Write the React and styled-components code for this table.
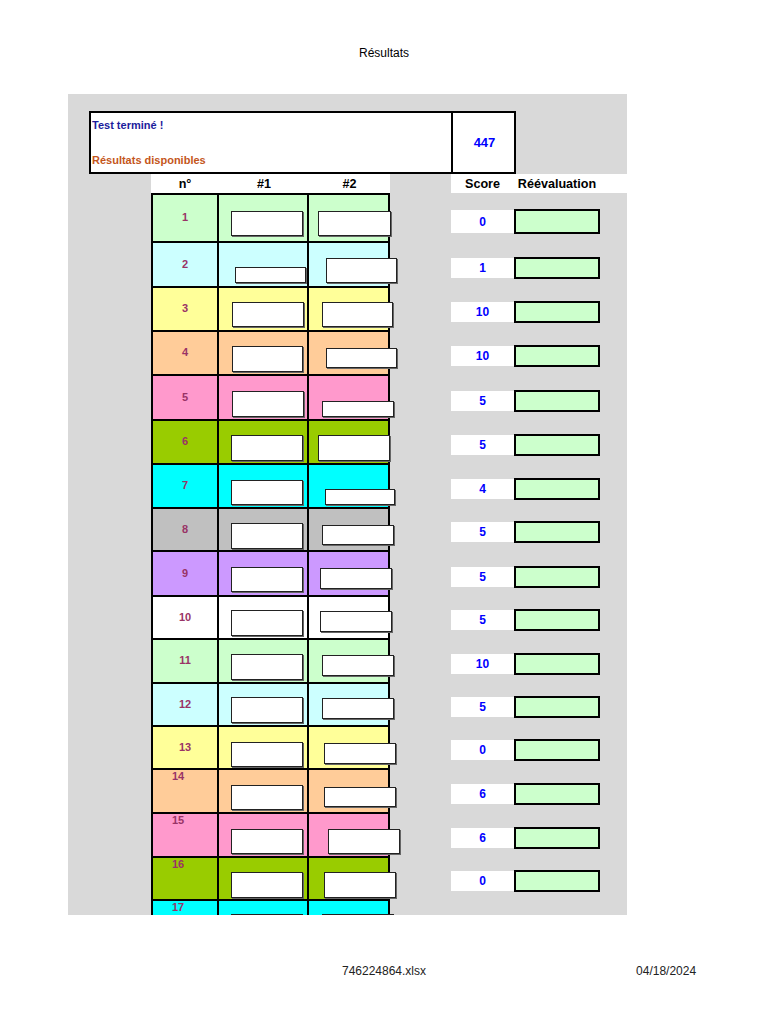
import React from "react";
import styled, { createGlobalStyle } from "styled-components";

const GlobalStyle = createGlobalStyle`
  html, body {
    margin: 0;
    padding: 0;
    background: #fff;
  }
  body {
    font-family: "Liberation Sans", Arial, sans-serif;
    color: #000;
  }
`;

const COLORS = {
  green: "#ccffcc",
  ice: "#ccffff",
  yellow: "#ffff99",
  peach: "#ffcc99",
  pink: "#ff99cc",
  olive: "#99cc00",
  cyan: "#00ffff",
  gray: "#c0c0c0",
  lilac: "#cc99ff",
  white: "#ffffff",
};

// [color, height, box #1 [left, top, w, h], box #2 [left, top, w, h], score]
const rows = [
  ["green", 50, [12, 16, 72, 25], [9, 16, 73, 25], 0],
  ["ice", 45, [16, 24, 71, 16], [17, 15, 71, 25], 1],
  ["yellow", 44, [13, 14, 72, 25], [13, 14, 71, 25], 10],
  ["peach", 44, [13, 14, 71, 26], [17, 16, 71, 20], 10],
  ["pink", 45, [13, 15, 72, 26], [13, 25, 72, 16], 5],
  ["olive", 44, [12, 14, 72, 26], [9, 14, 72, 26], 5],
  ["cyan", 44, [12, 15, 72, 25], [16, 24, 70, 16], 4],
  ["gray", 43, [12, 14, 72, 26], [13, 16, 72, 20], 5],
  ["lilac", 45, [12, 15, 72, 25], [11, 16, 72, 21], 5],
  ["white", 43, [12, 13, 72, 26], [11, 14, 72, 21], 5],
  ["green", 44, [12, 14, 72, 26], [13, 15, 72, 21], 10],
  ["ice", 43, [12, 13, 72, 26], [13, 14, 72, 21], 5],
  ["yellow", 43, [12, 15, 72, 25], [15, 16, 72, 21], 0],
  ["peach", 44, [12, 15, 72, 25], [15, 17, 72, 20], 6],
  ["pink", 44, [12, 15, 72, 25], [19, 15, 72, 25], 6],
  ["olive", 43, [12, 14, 72, 26], [15, 14, 72, 26], 0],
  ["cyan", 44, [12, 13, 72, 25], [13, 13, 72, 25], null],
];

const COLUMNS = "83px 68px 90px 81px 61px 63px 86px 1fr";

const Page = styled.div`
  width: 768px;
  height: 1024px;
  display: flex;
  flex-direction: column;
`;

const Title = styled.div`
  height: 94px;
  box-sizing: border-box;
  padding-top: 45px;
  text-align: center;
  font-size: 12px;
  line-height: 16px;
`;

const Sheet = styled.div`
  margin-left: 68px;
  width: 559px;
  height: 821px;
  background: #d9d9d9;
  overflow: hidden;
  padding-top: 17px;
  box-sizing: border-box;
`;

const Banner = styled.div`
  display: flex;
  margin-left: 21px;
  height: 63px;
`;

const Message = styled.div`
  width: 364px;
  box-sizing: border-box;
  border: 2px solid #000;
  background: #fff;
  display: flex;
  flex-direction: column;
  justify-content: space-between;
  padding: 6px 1px 6px;
  font-size: 11px;
  font-weight: bold;
`;

const Line = styled.span`
  color: ${(p) => p.$color};
`;

const Total = styled.div`
  width: 63px;
  box-sizing: border-box;
  border: 2px solid #000;
  border-left: none;
  background: #fff;
  display: flex;
  align-items: center;
  justify-content: center;
  padding-left: 2px;
  color: #0000ff;
  font-size: 13px;
  font-weight: bold;
`;

const HeadRow = styled.div`
  display: grid;
  grid-template-columns: ${COLUMNS};
  height: 19px;
`;

const HeadCell = styled.div`
  background: ${(p) => (p.$blank ? "transparent" : "#fff")};
  display: flex;
  align-items: center;
  justify-content: center;
  font-size: 12.6px;
  font-weight: bold;
`;

const Row = styled.div`
  display: grid;
  grid-template-columns: ${COLUMNS};
  height: ${(p) => p.$h}px;
`;

const NumCell = styled.div`
  grid-column: 2;
  box-sizing: border-box;
  background: ${(p) => p.$bg};
  border: 2px solid #000;
  border-top-width: ${(p) => (p.$first ? 2 : 0)}px;
  display: flex;
  align-items: ${(p) => (p.$corner ? "flex-start" : "center")};
  justify-content: ${(p) => (p.$corner ? "flex-start" : "center")};
  padding: ${(p) => (p.$corner ? "0 0 0 19px" : "0 0 2px")};
  color: #993366;
  font-size: 11px;
  font-weight: bold;
`;

const EntryCell = styled.div`
  box-sizing: border-box;
  background: ${(p) => p.$bg};
  border-right: 2px solid #000;
  border-bottom: 2px solid #000;
  border-top: ${(p) => (p.$first ? "2px solid #000" : "none")};
`;

const Box = styled.div`
  box-sizing: border-box;
  width: ${(p) => p.$w}px;
  height: ${(p) => p.$h}px;
  margin-left: ${(p) => p.$l}px;
  margin-top: ${(p) => p.$t}px;
  background: #fff;
  border: 1px solid #222;
  box-shadow: 1px 1px 0 #666;
`;

const ScoreCell = styled.div`
  grid-column: 6;
  align-self: end;
  margin-bottom: 10px;
  height: ${(p) => (p.$first ? 23 : 20)}px;
  background: #fff;
  display: flex;
  align-items: center;
  justify-content: center;
  color: #0000ff;
  font-size: 12px;
  font-weight: bold;
`;

const Recheck = styled.div`
  align-self: end;
  margin-bottom: 9px;
  height: ${(p) => (p.$first ? 25 : 22)}px;
  box-sizing: border-box;
  background: #ccffcc;
  border: 2px solid #000;
`;

const Footer = styled.div`
  display: grid;
  grid-template-columns: 1fr auto 1fr;
  margin-top: 49px;
  font-size: 12px;
  line-height: 14px;
  color: #222;
`;

const FooterDate = styled.span`
  padding-left: 210px;
`;

export default function App() {
  return (
    <Page>
      <GlobalStyle />
      <Title>Résultats</Title>
      <Sheet>
        <Banner>
          <Message>
            <Line $color="#1c1c9c">Test terminé !</Line>
            <Line $color="#c4561b">Résultats disponibles</Line>
          </Message>
          <Total>447</Total>
        </Banner>
        <HeadRow>
          <HeadCell $blank />
          <HeadCell>n°</HeadCell>
          <HeadCell>#1</HeadCell>
          <HeadCell>#2</HeadCell>
          <HeadCell $blank />
          <HeadCell>Score</HeadCell>
          <HeadCell>Réévaluation</HeadCell>
          <HeadCell />
        </HeadRow>
        {rows.map(([color, h, a, b, score], i) => {
          const bg = COLORS[color];
          const first = i === 0;
          return (
            <Row key={i} $h={h}>
              <NumCell $bg={bg} $first={first} $corner={i >= 13}>
                {i + 1}
              </NumCell>
              <EntryCell $bg={bg} $first={first}>
                <Box $l={a[0]} $t={a[1]} $w={a[2]} $h={a[3]} />
              </EntryCell>
              <EntryCell $bg={bg} $first={first}>
                <Box $l={b[0]} $t={b[1]} $w={b[2]} $h={b[3]} />
              </EntryCell>
              {score !== null && (
                <>
                  <ScoreCell $first={first}>{score}</ScoreCell>
                  <Recheck $first={first} />
                </>
              )}
            </Row>
          );
        })}
      </Sheet>
      <Footer>
        <span />
        <span>746224864.xlsx</span>
        <FooterDate>04/18/2024</FooterDate>
      </Footer>
    </Page>
  );
}
